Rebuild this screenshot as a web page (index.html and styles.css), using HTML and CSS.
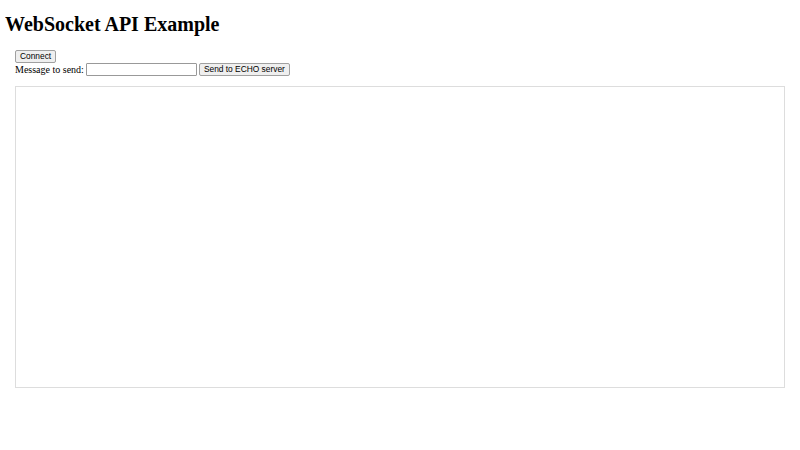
FILE: index.html
```html
<!DOCTYPE html>
<html>
<head>
<meta charset="utf-8">
<title>WebSocket API Example</title>
<link rel="stylesheet" href="styles.css">
</head>
<body>
<h1 class="title">WebSocket API Example</h1>
<div class="panel">
  <div class="row">
    <button class="btn">Connect</button>
  </div>
  <div class="row">
    <label class="label">Message to send:</label>
    <input class="msg" type="text">
    <button class="btn">Send to ECHO server</button>
  </div>
  <div class="log"></div>
</div>
</body>
</html>
```
FILE: styles.css
```css
html {
  background: #fff;
}
body {
  margin: 5px;
  font-family: "Liberation Serif", "Times New Roman", serif;
  font-size: 10px;
  color: #000;
}
.title {
  font-size: 20px;
  line-height: 23px;
  font-weight: bold;
  margin: 8px 0 14px 0;
}
.panel {
  margin: 0 10px;
}
.row {
  display: flex;
  align-items: center;
  gap: 2px;
  height: 13px;
}
.label {
  line-height: 13px;
}
.btn {
  font-family: "Liberation Sans", Arial, sans-serif;
  font-size: 8.4px;
  line-height: 11px;
  height: 13px;
  padding: 0 4px;
  margin: 0;
  border: 1px solid #a0a0a0;
  border-radius: 2px;
  background: #efefef;
  color: #000;
  box-sizing: border-box;
}
.msg {
  width: 111px;
  height: 13px;
  box-sizing: border-box;
  margin: 0;
  padding: 0 1px;
  border: 1px solid #999;
  border-radius: 1px;
  font-size: 8.4px;
}
.log {
  margin-top: 10px;
  height: 300px;
  border: 1px solid #ddd;
}
```
